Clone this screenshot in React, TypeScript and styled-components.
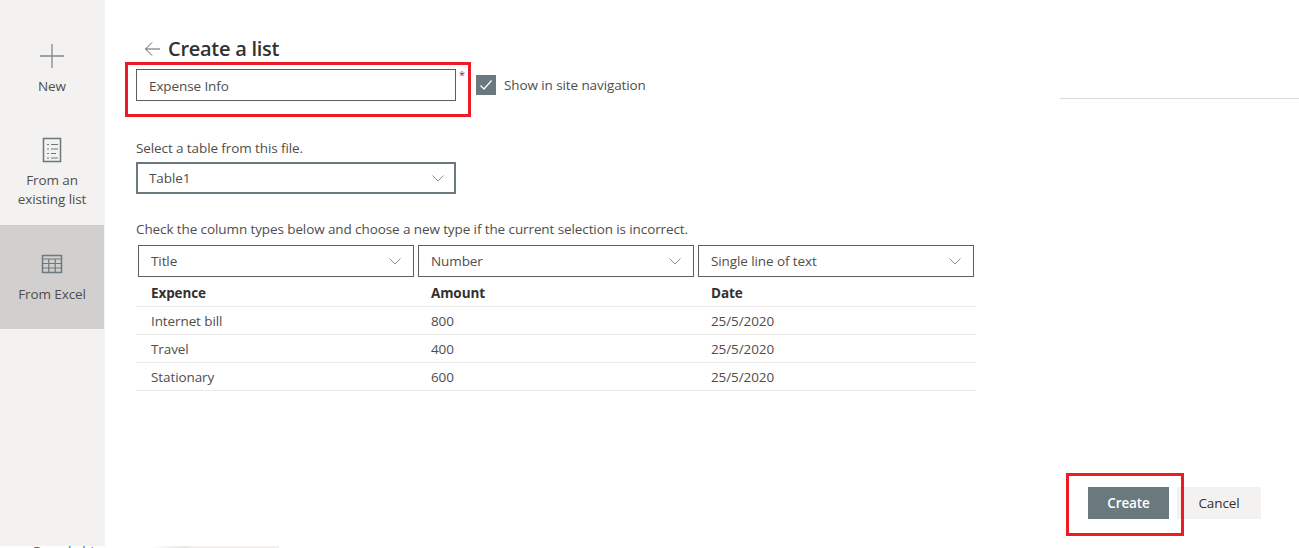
import styled, { createGlobalStyle } from "styled-components";

const GlobalStyle = createGlobalStyle`
  html, body {
    margin: 0;
    padding: 0;
    background: #ffffff;
  }
  body {
    font-family: "Open Sans", "Noto Sans", "Liberation Sans", sans-serif;
    font-size: 13.5px;
    letter-spacing: -0.1px;
    color: #323130;
  }
`;

const Page = styled.div`
  width: 1299px;
  height: 548px;
  overflow: hidden;
`;

const Panel = styled.div`
  display: flex;
  height: 546px;
`;

const Sidebar = styled.nav`
  width: 105px;
  flex: none;
  padding-top: 17px;
  box-sizing: border-box;
  background: #f3f2f1;
`;

const NavItem = styled.div<{ $active?: boolean }>`
  display: flex;
  flex-direction: column;
  align-items: center;
  justify-content: center;
  width: 104px;
  height: 104px;
  box-sizing: border-box;
  padding-bottom: 3px;
  background: ${(p) => (p.$active ? "#d2d0ce" : "transparent")};
`;

const NavIcon = styled.svg`
  width: 32px;
  height: 32px;
  display: block;
  flex: none;
`;

const NavLabel = styled.div`
  margin-top: 5px;
  width: 90px;
  text-align: center;
  line-height: 19px;
  color: #504e4c;
`;

const Content = styled.main`
  width: 955px;
  flex: none;
  box-sizing: border-box;
  padding: 36px 0 0 31px;
`;

const TitleRow = styled.div`
  display: flex;
  align-items: center;
  gap: 7px;
  height: 25px;
  padding-left: 8px;
`;

const BackIcon = styled.svg`
  width: 17px;
  height: 16px;
  display: block;
`;

const Title = styled.h1`
  margin: 0;
  font-size: 20px;
  line-height: 25px;
  font-weight: 600;
  letter-spacing: -0.27px;
  color: #323130;
`;

const NameRow = styled.div`
  display: flex;
  align-items: center;
  margin-top: 8px;
`;

const NameField = styled.div`
  position: relative;
  width: 320px;
`;

const Box = styled.div<{ $strong?: boolean; $width: number; $top?: number; $lowered?: boolean }>`
  display: flex;
  align-items: center;
  justify-content: space-between;
  width: ${(p) => p.$width}px;
  height: 32px;
  margin-top: ${(p) => p.$top ?? 0}px;
  box-sizing: border-box;
  padding: ${(p) => (p.$strong ? "0 10px 0 11px" : "0 12px")};
  padding-top: ${(p) => (p.$lowered ? 1 : 0)}px;
  border: ${(p) => (p.$strong ? "2px solid #69797e" : "1px solid #605e5c")};
  background: #ffffff;
  color: #504e4c;
`;

const Required = styled.span`
  position: absolute;
  left: 323px;
  top: -1px;
  font-size: 11px;
  line-height: 14px;
  color: #a4262c;
`;

const RedMark = styled.div<{ $top: number; $right: number; $bottom: number; $left: number }>`
  position: absolute;
  top: ${(p) => p.$top}px;
  right: ${(p) => p.$right}px;
  bottom: ${(p) => p.$bottom}px;
  left: ${(p) => p.$left}px;
  border: 3px solid #ed1c24;
  pointer-events: none;
`;

const CheckRow = styled.label`
  display: flex;
  align-items: center;
  gap: 8px;
  margin-left: 20px;
  height: 20px;
  margin-top: -1px;
  color: #504e4c;
`;

const CheckBox = styled.span`
  display: flex;
  align-items: center;
  justify-content: center;
  width: 20px;
  height: 20px;
  background: #69797e;
`;

const FieldLabel = styled.div<{ $gap: number }>`
  margin-top: ${(p) => p.$gap}px;
  height: 18px;
  line-height: 18px;
  color: #504e4c;
`;

const TypeRow = styled.div`
  display: flex;
  gap: 4px;
  margin: 7px 0 0 2px;
`;

const Grid = styled.div`
  width: 840px;
`;

const GridRow = styled.div<{ $head?: boolean }>`
  display: grid;
  grid-template-columns: repeat(3, 280px);
  height: ${(p) => (p.$head ? 30 : 28)}px;
  padding-top: ${(p) => (p.$head ? 2 : 0)}px;
  align-items: center;
  box-sizing: border-box;
  border-bottom: 1px solid #edebe9;
`;

const GridCell = styled.div<{ $head?: boolean }>`
  padding-left: 15px;
  font-weight: ${(p) => (p.$head ? 700 : 400)};
  color: ${(p) => (p.$head ? "#323130" : "#504e4c")};
`;

const Rail = styled.aside`
  flex: 1;
  display: flex;
  flex-direction: column;
  justify-content: space-between;
  padding: 98px 0 27px;
  box-sizing: border-box;
`;

const Hairline = styled.div`
  height: 1px;
  background: #d9d9d9;
`;

const Footer = styled.div`
  display: flex;
  gap: 8px;
  padding-left: 28px;
`;

const ActionWrap = styled.div`
  position: relative;
`;

const Action = styled.div<{ $primary?: boolean; $width: number }>`
  display: flex;
  align-items: center;
  justify-content: center;
  width: ${(p) => p.$width}px;
  height: 32px;
  font-weight: ${(p) => (p.$primary ? 600 : 400)};
  background: ${(p) => (p.$primary ? "#69797e" : "#f3f2f1")};
  color: ${(p) => (p.$primary ? "#ffffff" : "#323130")};
`;

const Peek = styled.div`
  display: flex;
  height: 2px;
  overflow: hidden;
`;

const PeekText = styled.div`
  width: 150px;
  flex: none;
  padding-left: 33px;
  box-sizing: border-box;
  line-height: 10px;
  color: #605e5c;
`;

const PeekBar = styled.div`
  width: 129px;
  background: linear-gradient(90deg, #ffffff 0%, #e8e7e6 28%, #f0efee 30%, #f0efee 100%);
`;

const Chevron = () => (
  <svg width="12" height="7" viewBox="0 0 12 7" fill="none" aria-hidden="true">
    <path d="M0.5 0.5 L6 6 L11.5 0.5" stroke="#8a8f92" strokeWidth="1" />
  </svg>
);

const columns = ["Title", "Number", "Single line of text"];

const rows = [
  ["Internet bill", "800", "25/5/2020"],
  ["Travel", "400", "25/5/2020"],
  ["Stationary", "600", "25/5/2020"],
];

export default function App() {
  return (
    <Page>
      <GlobalStyle />
      <Panel>
        <Sidebar>
          <NavItem>
            <NavIcon viewBox="0 0 32 32" fill="none" stroke="#7b8a8e">
              <path d="M16 4 V28 M4 16 H28" strokeWidth="1.3" />
            </NavIcon>
            <NavLabel>New</NavLabel>
          </NavItem>
          <NavItem>
            <NavIcon viewBox="0 0 32 32" fill="none" stroke="#69797e">
              <path d="M7.5 4.5 H24.5 V27.5 H7.5 Z" strokeWidth="1.5" />
              <path d="M11 10.5 H13 M15 10.5 H22 M11 15 H13 M15 15 H22 M11 19.5 H13 M15 19.5 H20 M11 24 H13 M15 24 H22" strokeWidth="1.1" />
            </NavIcon>
            <NavLabel>From an existing list</NavLabel>
          </NavItem>
          <NavItem $active>
            <NavIcon viewBox="0 0 32 32" fill="none" stroke="#69797e">
              <path d="M6.5 7.5 H25.5 V24.5 H6.5 Z" strokeWidth="1.5" />
              <path d="M6.5 11 H25.5 M6.5 15.5 H25.5 M6.5 20 H25.5 M12.8 11 V24.5 M19.2 11 V24.5" strokeWidth="1.2" />
            </NavIcon>
            <NavLabel>From Excel</NavLabel>
          </NavItem>
        </Sidebar>
        <Content>
          <TitleRow>
            <BackIcon viewBox="0 0 17 16" fill="none" stroke="#605e5c">
              <path d="M16 8 H1.5 M8 1.5 L1.5 8 L8 14.5" strokeWidth="1" />
            </BackIcon>
            <Title>Create a list</Title>
          </TitleRow>
          <NameRow>
            <NameField>
              <Box $width={320} $lowered>Expense Info</Box>
              <Required>*</Required>
              <RedMark $top={-7} $right={-15} $bottom={-16} $left={-11} />
            </NameField>
            <CheckRow>
              <CheckBox>
                <svg width="14" height="12" viewBox="0 0 14 12" fill="none" aria-hidden="true">
                  <path d="M1.5 6.5 L5 10 L12.5 1.5" stroke="#ffffff" strokeWidth="1.2" />
                </svg>
              </CheckBox>
              Show in site navigation
            </CheckRow>
          </NameRow>
          <FieldLabel $gap={38}>Select a table from this file.</FieldLabel>
          <Box $strong $width={320} $top={5}>
            Table1
            <Chevron />
          </Box>
          <FieldLabel $gap={26}>Check the column types below and choose a new type if the current selection is incorrect.</FieldLabel>
          <TypeRow>
            {columns.map((name) => (
              <Box key={name} $width={276}>
                {name}
                <Chevron />
              </Box>
            ))}
          </TypeRow>
          <Grid>
            <GridRow $head>
              <GridCell $head>Expence</GridCell>
              <GridCell $head>Amount</GridCell>
              <GridCell $head>Date</GridCell>
            </GridRow>
            {rows.map((row) => (
              <GridRow key={row[0]}>
                {row.map((cell, i) => (
                  <GridCell key={i}>{cell}</GridCell>
                ))}
              </GridRow>
            ))}
          </Grid>
        </Content>
        <Rail>
          <Hairline />
          <Footer>
            <ActionWrap>
              <Action $primary $width={81}>Create</Action>
              <RedMark $top={-14} $right={-15} $bottom={-17} $left={-22} />
            </ActionWrap>
            <Action $width={84}>Cancel</Action>
          </Footer>
        </Rail>
      </Panel>
      <Peek>
        <PeekText>Recycle bin</PeekText>
        <PeekBar />
      </Peek>
    </Page>
  );
}
